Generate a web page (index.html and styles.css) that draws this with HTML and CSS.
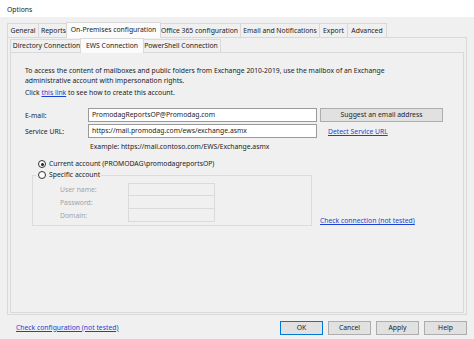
FILE: index.html
```html
<!DOCTYPE html>
<html>
<head>
<meta charset="utf-8">
<link rel="stylesheet" href="styles.css">
</head>
<body>
<div class="titlebar">Options</div>
<div class="main">
  <div class="tabs tabs-top">
    <div class="tab t-general">General</div>
    <div class="tab t-reports">Reports</div>
    <div class="tab sel t-onprem">On-Premises configuration</div>
    <div class="tab t-o365">Office 365 configuration</div>
    <div class="tab t-email">Email and Notifications</div>
    <div class="tab t-export">Export</div>
    <div class="tab t-adv">Advanced</div>
  </div>
  <div class="panel outer">
    <div class="tabs tabs-sub">
      <div class="tab t-dir">Directory Connection</div>
      <div class="tab sel t-ews">EWS Connection</div>
      <div class="tab t-ps">PowerShell Connection</div>
    </div>
    <div class="panel inner">
      <p class="intro">To access the content of mailboxes and public folders from Exchange 2010-2019, use the mailbox of an Exchange<br>administrative account with impersonation rights.</p>
      <p class="click">Click <a class="link">this link</a> to see how to create this account.</p>
      <div class="form">
        <span class="lbl">E-mail:</span>
        <div class="input">PromodagReportsOP@Promodag.com</div>
        <div class="btn suggest">Suggest an email address</div>
        <span class="lbl">Service URL:</span>
        <div class="input">https://mail.promodag.com/ews/exchange.asmx</div>
        <a class="link detect">Detect Service URL</a>
        <span></span>
        <div class="example">Example: https://mail.contoso.com/EWS/Exchange.asmx</div>
        <span></span>
      </div>
      <div class="radio-row"><span class="radio checked"></span>Current account (PROMODAG\promodagreportsOP)</div>
      <div class="acct-row">
        <fieldset class="group">
          <legend class="legend"><span class="radio"></span>Specific account</legend>
          <div class="cred">
            <span class="dlbl">User name:</span><div class="dbox"></div>
            <span class="dlbl">Password:</span><div class="dbox mid"></div>
            <span class="dlbl">Domain:</span><div class="dbox last"></div>
          </div>
        </fieldset>
        <a class="link check-conn">Check connection (not tested)</a>
      </div>
    </div>
  </div>
  <div class="footer">
    <a class="link check-conf">Check configuration (not tested)</a>
    <div class="buttons">
      <div class="btn fbtn ok">OK</div>
      <div class="btn fbtn">Cancel</div>
      <div class="btn fbtn">Apply</div>
      <div class="btn fbtn">Help</div>
    </div>
  </div>
</div>
</body>
</html>
```

FILE: styles.css
```css
* { box-sizing: border-box; }
html, body { margin: 0; padding: 0; }
body {
  width: 474px;
  height: 339px;
  overflow: hidden;
  background: #f0f0f0;
  font-family: "Noto Sans", sans-serif;
  font-size: 6.8px;
  color: #222;
}
.titlebar {
  height: 17px;
  background: #fff;
  line-height: 19px;
  padding-left: 7px;
}
.main {
  padding: 5px 7px 0 7px;
}
.tabs {
  display: flex;
  align-items: flex-end;
  height: 15px;
  position: relative;
  z-index: 2;
}
.tabs-sub {
  height: 14px;
}
.tab {
  height: 14px;
  line-height: 13px;
  border: 1px solid #d9d9d9;
  border-bottom: none;
  margin-right: -1px;
  background: #f0f0f0;
  text-align: center;
  white-space: nowrap;
}
.tabs-sub .tab { height: 13px; line-height: 12px; }
.tab.sel {
  height: 16px;
  line-height: 14px;
  margin-left: -2px;
  margin-right: -3px;
  margin-bottom: -1px;
  background: #fbfbfb;
  position: relative;
  z-index: 3;
}
.tabs-sub .tab.sel { height: 15px; line-height: 13px; }
.t-general { width: 32px; }
.t-reports { width: 31px; }
.t-onprem { width: 95px; }
.t-o365 { width: 83px; }
.t-email { width: 80px; }
.t-export { width: 29px; }
.t-adv { width: 40px; }
.t-dir { width: 73px; }
.t-ews { width: 64px; }
.t-ps { width: 80px; }

.panel {
  border: 1px solid #d9d9d9;
}
.outer {
  height: 278px;
  padding: 0 2px 2px 2px;
  background: #f0f0f0;
}
.inner {
  height: 261px;
  padding: 13px 14px 0 14px;
}
p { margin: 0; }
.intro { line-height: 10px; }
.click { line-height: 10px; margin-top: 2px; }
.link { color: #1f3fd0; text-decoration: underline; }

.form {
  display: grid;
  grid-template-columns: 60px 229px 123px;
  column-gap: 3px;
  row-gap: 2px;
  margin-top: 10px;
  align-items: center;
}
.input {
  height: 14px;
  line-height: 12px;
  background: #fff;
  border: 1px solid #9a9a9a;
  padding-left: 3px;
  white-space: nowrap;
  overflow: hidden;
}
.btn {
  height: 14px;
  line-height: 12px;
  background: #e1e1e1;
  border: 1px solid #adadad;
  text-align: center;
  white-space: nowrap;
}
.detect { padding-left: 8px; line-height: 13px; }
.example { line-height: 10px; padding-left: 2px; margin-top: 2px; }

.radio-row {
  display: flex;
  align-items: center;
  line-height: 10px;
  margin-top: 7px;
  margin-left: 13px;
}
.radio {
  display: inline-block;
  width: 8px;
  height: 8px;
  border: 1px solid #333;
  border-radius: 50%;
  background: #fff;
  margin-right: 3px;
  position: relative;
  flex: none;
}
.radio.checked::after {
  content: "";
  position: absolute;
  left: 1.5px;
  top: 1.5px;
  width: 3px;
  height: 3px;
  border-radius: 50%;
  background: #222;
}
.acct-row {
  display: flex;
  align-items: flex-end;
  margin-top: 1px;
  margin-left: 7px;
}
.group {
  width: 280px;
  margin: 0;
  padding: 0 0 3px 27px;
  border: 1px solid #dcdcdc;
  min-width: 0;
}
.legend {
  display: flex;
  align-items: center;
  line-height: 10px;
  padding: 0 1px 0 2px;
  margin-left: -24px;
}
.cred {
  display: grid;
  grid-template-columns: 68px 87px;
  margin-top: 3px;
}
.dlbl {
  color: #a3a3a3;
  line-height: 13px;
}
.dbox {
  height: 13px;
  border: 1px solid #dadada;
  background: #f0f0f0;
}
.dbox.mid, .dbox.last { border-top: none; height: 13px; }
.check-conn {
  margin-left: 8px;
  line-height: 10px;
}

.footer {
  display: flex;
  justify-content: space-between;
  align-items: center;
  margin-top: 6px;
  height: 13px;
}
.check-conf { margin-left: 9px; line-height: 10px; }
.buttons { display: flex; gap: 5px; }
.fbtn { width: 43px; height: 14px; }
.ok { border-color: #0078d7; }
```
